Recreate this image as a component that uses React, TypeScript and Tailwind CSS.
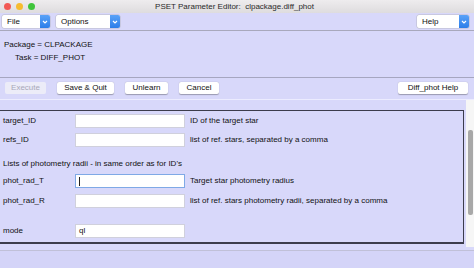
import React from 'react'

const font = { fontFamily: '"Liberation Sans", Arial, sans-serif' }

function Dropdown({ label, width }: { label: string; width: string }) {
  return (
    <div className={`flex h-[13px] items-stretch rounded-[2px] bg-white shadow-[0_0_0_0.5px_#b8b8c8] ${width}`}>
      <span className="flex-1 pl-[5px] text-[8px] leading-[13px] text-[#111]">{label}</span>
      <span className="flex w-[10px] items-center justify-center rounded-r-[2px] bg-gradient-to-b from-[#5aa2f8] to-[#2b7de9]">
        <svg width="6" height="4" viewBox="0 0 6 4">
          <path d="M1 1 L3 3 L5 1" fill="none" stroke="white" strokeWidth="1.1" />
        </svg>
      </span>
    </div>
  )
}

function Btn({ label, width, disabled }: { label: string; width: string; disabled?: boolean }) {
  return (
    <div
      className={`flex h-[12px] items-center justify-center rounded-[2px] text-[8px] ${width} ${
        disabled ? 'bg-[#ececf8] text-[#a8a8b8]' : 'bg-white text-[#111] shadow-[0_0.5px_1px_#9a9ab0]'
      }`}
    >
      {label}
    </div>
  )
}

function Row({ label, value, desc, focus, mt }: { label: string; value?: string; desc?: string; focus?: boolean; mt: string }) {
  return (
    <div className={`flex h-[14px] items-center ${mt}`}>
      <span className="w-[75px] pl-[3px] text-[8px] text-[#111]">{label}</span>
      <div
        className={`flex h-[14px] w-[110px] items-center bg-white pl-[3px] text-[8px] text-[#111] ${
          focus ? 'border border-[#7fa9e6]' : 'border border-[#d0d0dc]'
        }`}
      >
        {focus && <span className="h-[9px] w-px bg-[#222]" />}
        {value}
      </div>
      {desc && <span className="pl-[5px] text-[8px] text-[#111]">{desc}</span>}
    </div>
  )
}

export default function App() {
  return (
    <div className="flex h-[268px] w-[474px] flex-col overflow-hidden bg-[#d8d8fa]" style={font}>
      <div className="relative flex h-[13px] items-center bg-gradient-to-b from-[#eeecee] to-[#dedcde]">
        <div className="flex gap-[5px] pl-[4px]">
          <span className="h-[7px] w-[7px] rounded-full bg-[#f25a55]" />
          <span className="h-[7px] w-[7px] rounded-full bg-[#f6bc2f]" />
          <span className="h-[7px] w-[7px] rounded-full bg-[#3fc43b]" />
        </div>
        <span className="flex-1 pr-[40px] text-center text-[8px] text-[#2a2a2a]">
          PSET Parameter Editor:&nbsp; clpackage.diff_phot
        </span>
      </div>

      <div className="flex h-[18px] items-start gap-[6px] border-b border-[#a8a8bc] px-[2px] pt-[2px]">
        <Dropdown label="File" width="w-[48px]" />
        <Dropdown label="Options" width="w-[64px]" />
        <div className="flex-1" />
        <div className="pr-[3px]">
          <Dropdown label="Help" width="w-[52px]" />
        </div>
      </div>

      <div className="h-[47px] border-b border-[#a6a6c0] pt-[7px] text-[8px] leading-[13px] text-[#111]">
        <div className="pl-[4px]">Package = CLPACKAGE</div>
        <div className="pl-[15px]">Task = DIFF_PHOT</div>
      </div>

      <div className="flex h-[22px] items-start border-b border-[#ececff] pl-[5px] pr-[6px] pt-[4px]">
        <Btn label="Execute" width="w-[41px]" disabled />
        <div className="w-[11px]" />
        <Btn label="Save & Quit" width="w-[57px]" />
        <div className="w-[11px]" />
        <Btn label="Unlearn" width="w-[43px]" />
        <div className="w-[11px]" />
        <Btn label="Cancel" width="w-[40px]" />
        <div className="flex-1" />
        <Btn label="Diff_phot Help" width="w-[70px]" />
      </div>

      <div className="flex h-[147px]">
        <div className="w-[466px] pt-[10px]">
          <div className="h-[134px] w-[464px] border-t border-r border-b-2 border-[#3c3c4c] pt-[3px]">
            <Row label="target_ID" desc="ID of the target star" mt="mt-0" />
            <Row label="refs_ID" desc="list of ref. stars, separated by a comma" mt="mt-[5px]" />
            <div className="mt-[13px] h-[8px] pl-[3px] text-[8px] leading-[8px] text-[#111]">
              Lists of photometry radii - in same order as for ID's
            </div>
            <Row label="phot_rad_T" desc="Target star photometry radius" focus mt="mt-[6px]" />
            <Row label="phot_rad_R" desc="list of ref. stars photometry radii, separated by a comma" mt="mt-[6px]" />
            <Row label="mode" value="ql" mt="mt-[16px]" />
          </div>
        </div>
        <div className="relative w-[8px] bg-[#f6f6f6]">
          <div className="absolute left-[2px] top-[30px] h-[85px] w-[5px] rounded-[2px] bg-[#a8a8a8]" />
        </div>
      </div>

      <div className="h-[3px]" />
      <div className="h-px bg-[#c0c0d8]" />
      <div className="flex-1 bg-[#d4d4f8]" />
    </div>
  )
}
